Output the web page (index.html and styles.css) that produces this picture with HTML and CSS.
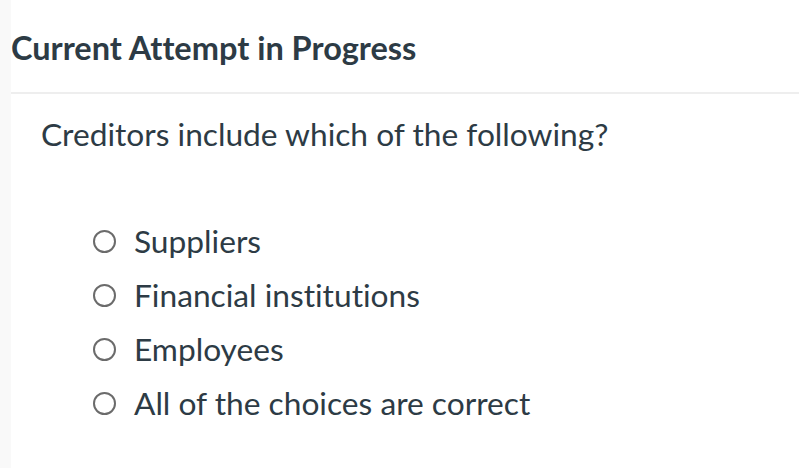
FILE: index.html
```html
<!DOCTYPE html>
<html>
<head>
<meta charset="utf-8">
<link rel="stylesheet" href="styles.css">
</head>
<body>
<div class="page">
  <div class="strip"></div>
  <div class="content">
    <h1 class="title">Current Attempt in Progress</h1>
    <div class="question">
      <p class="prompt">Creditors include which of the following?</p>
      <ul class="options">
        <li class="option"><span class="radio"></span><span class="label">Suppliers</span></li>
        <li class="option"><span class="radio"></span><span class="label">Financial institutions</span></li>
        <li class="option"><span class="radio"></span><span class="label">Employees</span></li>
        <li class="option"><span class="radio"></span><span class="label">All of the choices are correct</span></li>
      </ul>
    </div>
  </div>
</div>
</body>
</html>
```
FILE: styles.css
```css
html, body {
  margin: 0;
  padding: 0;
  background: #ffffff;
}
body {
  font-family: Lato, "Liberation Sans", sans-serif;
  color: #2d3b45;
  font-variant-ligatures: none;
}
.page {
  display: flex;
  width: 799px;
  height: 468px;
  overflow: hidden;
}
.strip {
  width: 11px;
  flex: none;
  background: #f9f9f9;
}
.content {
  flex: 1;
}
.title {
  margin: 0;
  padding: 29px 0 25px 0;
  font-size: 32.5px;
  font-weight: 700;
  line-height: 38px;
  border-bottom: 2px solid #eeeeee;
}
.question {
  padding-left: 30px;
}
.prompt {
  margin: 0;
  padding-top: 20px;
  font-size: 31.7px;
  line-height: 40px;
}
.options {
  list-style: none;
  margin: 60px 0 0 0;
  padding: 0 0 0 52px;
  display: flex;
  flex-direction: column;
}
.option {
  display: flex;
  align-items: center;
  height: 54px;
  gap: 18px;
}
.radio {
  width: 19px;
  height: 19px;
  border: 2px solid #6b6b6b;
  border-radius: 50%;
  flex: none;
}
.label {
  font-size: 31.7px;
  line-height: 38px;
}
```
